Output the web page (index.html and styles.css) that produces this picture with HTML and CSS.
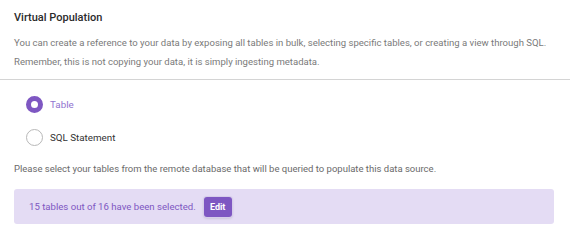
FILE: index.html
```html
<!DOCTYPE html>
<html lang="en">
<head>
    <meta charset="UTF-8">
    <title>Virtual Population</title>
    <link rel="stylesheet" href="styles.css">
</head>
<body>
    <section class="intro">
        <h2 class="titulo">Virtual Population</h2>
        <p class="descricao">You can create a reference to your data by exposing all tables in bulk, selecting specific tables, or creating a view through SQL.<br>Remember, this is not copying your data, it is simply ingesting metadata.</p>
    </section>
    <section class="opcoes">
        <label class="opcao ativa">
            <span class="radio"></span>
            <span>Table</span>
        </label>
        <label class="opcao">
            <span class="radio"></span>
            <span>SQL Statement</span>
        </label>
    </section>
    <p class="ajuda">Please select your tables from the remote database that will be queried to populate this data source.</p>
    <div class="aviso">
        <span>15 tables out of 16 have been selected.</span>
        <button class="editar">Edit</button>
    </div>
</body>
</html>
```

FILE: styles.css
```css
body {
    margin: 0;
    padding: 0;
    background: #ffffff;
    font-family: Roboto, "Liberation Sans", Arial, sans-serif;
    color: #333333;
}
.intro {
    padding: 11px 14px 8px 14px;
    border-bottom: 1px solid #d4d4d4;
}
.titulo {
    margin: 0;
    font-size: 11px;
    font-weight: 500;
    line-height: 14px;
    color: #2b2b2b;
}
.descricao {
    margin: 8px 0 0 0;
    font-size: 9.55px;
    line-height: 19px;
    color: #7a7a7a;
    white-space: nowrap;
}
.opcoes {
    display: flex;
    flex-direction: column;
    gap: 16px;
    padding: 16px 26px 0 26px;
}
.opcao {
    display: flex;
    align-items: center;
    gap: 7px;
    font-size: 9.8px;
    color: #333333;
    height: 17px;
}
.opcao.ativa {
    color: #9173cf;
}
.radio {
    box-sizing: border-box;
    width: 17px;
    height: 17px;
    border-radius: 50%;
    border: 1.5px solid #b8b8b8;
    background: #ffffff;
}
.opcao.ativa .radio {
    border: 5px solid #7e57c2;
}
.ajuda {
    margin: 16px 14px 0 14px;
    font-size: 9.5px;
    line-height: 14px;
    color: #6a6a6a;
}
.aviso {
    display: flex;
    align-items: center;
    gap: 8px;
    margin: 13px 16px 0 14px;
    padding: 0 15px;
    height: 35px;
    background: #e4dcf4;
    border-radius: 3px;
    font-size: 9.6px;
    color: #7e57c2;
}
.editar {
    background: #7e57c2;
    color: #ffffff;
    border: none;
    border-radius: 3px;
    font-family: Roboto, "Liberation Sans", Arial, sans-serif;
    font-size: 9px;
    font-weight: 700;
    padding: 0;
    width: 28px;
    height: 20px;
    box-shadow: 0 0 0 1px #d6cdea, 0 1px 3px rgba(0, 0, 0, 0.2);
}
```
